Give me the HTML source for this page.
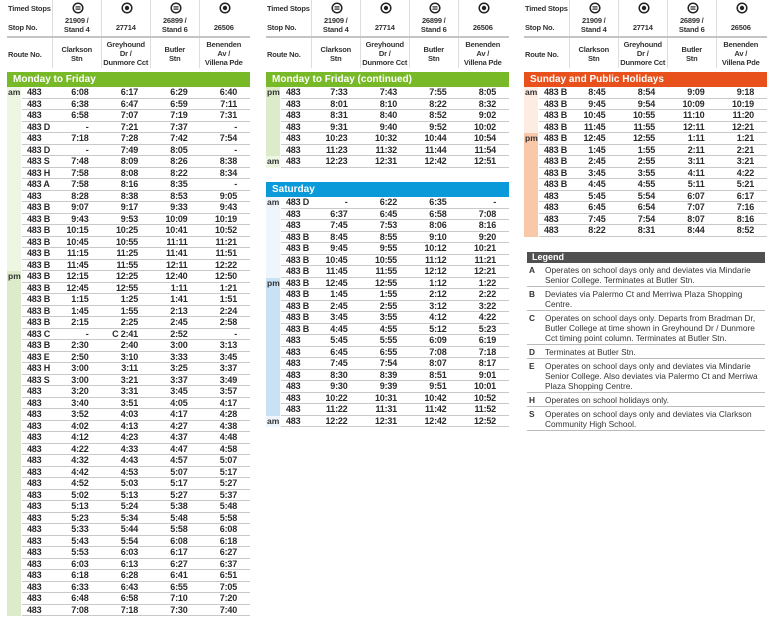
<!DOCTYPE html>
<html><head><meta charset="utf-8"><style>
*{margin:0;padding:0;box-sizing:border-box}
body{width:768px;height:620px;background:#fff;position:relative;overflow:hidden;font-family:"Liberation Sans",sans-serif;color:#2a2a2a}
.p{position:absolute;top:0;width:243px;height:620px}
.h{position:absolute;font:bold 7.5px/9px "Liberation Sans",sans-serif;color:#333;white-space:nowrap;letter-spacing:-0.2px}
.c{position:absolute;width:49.5px;text-align:center;font:bold 7.5px/9px "Liberation Sans",sans-serif;color:#333;white-space:nowrap;letter-spacing:-0.2px}
.vl{position:absolute;top:0;height:68px;width:1px;background:#ddd}
.hl{position:absolute;left:0;width:243px;top:36px;height:2px;background:#c4c4c4}
.ic{position:absolute;top:2px;width:12px;height:12px}
.band{position:absolute;left:0;width:243px;height:15px;color:#fff;font:bold 10px/15px "Liberation Sans",sans-serif;padding-left:6px;white-space:nowrap}
.sec{position:absolute;left:0;width:243px}
.r{display:flex;height:11.5px;margin-left:15px;border-bottom:1px solid #c9c9c9;font:bold 9px/11px "Liberation Sans",sans-serif;color:#2a2a2a;white-space:nowrap;letter-spacing:-0.2px}
.r span{display:block;width:49.5px;text-align:right;padding-right:13px;overflow:visible}
.r span:first-child{width:30px;text-align:left;padding-left:5px;padding-right:0}
.sd{position:absolute;left:0;width:14px;font:bold 8.5px/11px "Liberation Sans",sans-serif;padding-left:1px;color:#333}
.lg{position:absolute;left:527px;width:238px}
.lh{height:11px;background:#505050;color:#fff;font:bold 9px/11px "Liberation Sans",sans-serif;padding-left:5px}
.le{display:flex;border-bottom:1.5px solid #bbb;font:8.3px/10px "Liberation Sans",sans-serif;color:#333;padding:2px 0 1px 2px}
.le b{width:16px;flex:none}
</style></head><body>

<div class="p" style="left:7px">
<div class="h" style="left:1px;top:4px">Timed Stops</div>
<div class="h" style="left:1px;top:23px">Stop No.</div>
<div class="h" style="left:1px;top:50px">Route No.</div>
<div class="vl" style="left:45px"></div><div class="vl" style="left:94px"></div><div class="vl" style="left:143px"></div><div class="vl" style="left:192px"></div>
<svg class="ic" style="left:65px" viewBox="0 0 12 12"><circle cx="6" cy="6" r="4.8" fill="none" stroke="#222" stroke-width="1.5"/><rect x="3.5" y="4.3" width="5" height="1.2" fill="#222"/><rect x="3.5" y="6.5" width="5" height="1.2" fill="#222"/></svg>
<svg class="ic" style="left:114px" viewBox="0 0 12 12"><circle cx="6" cy="6" r="4.8" fill="none" stroke="#222" stroke-width="1.5"/><circle cx="6" cy="6" r="2.2" fill="#222"/></svg>
<svg class="ic" style="left:163px" viewBox="0 0 12 12"><circle cx="6" cy="6" r="4.8" fill="none" stroke="#222" stroke-width="1.5"/><rect x="3.5" y="4.3" width="5" height="1.2" fill="#222"/><rect x="3.5" y="6.5" width="5" height="1.2" fill="#222"/></svg>
<svg class="ic" style="left:212px" viewBox="0 0 12 12"><circle cx="6" cy="6" r="4.8" fill="none" stroke="#222" stroke-width="1.5"/><circle cx="6" cy="6" r="2.2" fill="#222"/></svg>
<div class="c" style="left:45px;top:16px">21909 /<br>Stand 4</div>
<div class="c" style="left:94px;top:23px">27714</div>
<div class="c" style="left:143px;top:16px">26899 /<br>Stand 6</div>
<div class="c" style="left:192px;top:23px">26506</div>
<div class="hl"></div>
<div class="c" style="left:45px;top:45px">Clarkson<br>Stn</div>
<div class="c" style="left:94px;top:40px">Greyhound<br>Dr /<br>Dunmore Cct</div>
<div class="c" style="left:143px;top:45px">Butler<br>Stn</div>
<div class="c" style="left:192px;top:40px">Benenden<br>Av /<br>Villena Pde</div>
<div class="band" style="top:72px;background:#78b928">Monday to Friday</div>
<div class="sd" style="top:87px;height:184px;background:#edf5e3">am</div>
<div class="sd" style="top:271px;height:345px;background:#dcebc9">pm</div>
<div class="sec" style="top:87px">
<div class="r"><span>483</span><span>6:08</span><span>6:17</span><span>6:29</span><span>6:40</span></div>
<div class="r"><span>483</span><span>6:38</span><span>6:47</span><span>6:59</span><span>7:11</span></div>
<div class="r"><span>483</span><span>6:58</span><span>7:07</span><span>7:19</span><span>7:31</span></div>
<div class="r"><span>483 D</span><span>-</span><span>7:21</span><span>7:37</span><span>-</span></div>
<div class="r"><span>483</span><span>7:18</span><span>7:28</span><span>7:42</span><span>7:54</span></div>
<div class="r"><span>483 D</span><span>-</span><span>7:49</span><span>8:05</span><span>-</span></div>
<div class="r"><span>483 S</span><span>7:48</span><span>8:09</span><span>8:26</span><span>8:38</span></div>
<div class="r"><span>483 H</span><span>7:58</span><span>8:08</span><span>8:22</span><span>8:34</span></div>
<div class="r"><span>483 A</span><span>7:58</span><span>8:16</span><span>8:35</span><span>-</span></div>
<div class="r"><span>483</span><span>8:28</span><span>8:38</span><span>8:53</span><span>9:05</span></div>
<div class="r"><span>483 B</span><span>9:07</span><span>9:17</span><span>9:33</span><span>9:43</span></div>
<div class="r"><span>483 B</span><span>9:43</span><span>9:53</span><span>10:09</span><span>10:19</span></div>
<div class="r"><span>483 B</span><span>10:15</span><span>10:25</span><span>10:41</span><span>10:52</span></div>
<div class="r"><span>483 B</span><span>10:45</span><span>10:55</span><span>11:11</span><span>11:21</span></div>
<div class="r"><span>483 B</span><span>11:15</span><span>11:25</span><span>11:41</span><span>11:51</span></div>
<div class="r"><span>483 B</span><span>11:45</span><span>11:55</span><span>12:11</span><span>12:22</span></div>
<div class="r"><span>483 B</span><span>12:15</span><span>12:25</span><span>12:40</span><span>12:50</span></div>
<div class="r"><span>483 B</span><span>12:45</span><span>12:55</span><span>1:11</span><span>1:21</span></div>
<div class="r"><span>483 B</span><span>1:15</span><span>1:25</span><span>1:41</span><span>1:51</span></div>
<div class="r"><span>483 B</span><span>1:45</span><span>1:55</span><span>2:13</span><span>2:24</span></div>
<div class="r"><span>483 B</span><span>2:15</span><span>2:25</span><span>2:45</span><span>2:58</span></div>
<div class="r"><span>483 C</span><span>-</span><span>C 2:41</span><span>2:52</span><span>-</span></div>
<div class="r"><span>483 B</span><span>2:30</span><span>2:40</span><span>3:00</span><span>3:13</span></div>
<div class="r"><span>483 E</span><span>2:50</span><span>3:10</span><span>3:33</span><span>3:45</span></div>
<div class="r"><span>483 H</span><span>3:00</span><span>3:11</span><span>3:25</span><span>3:37</span></div>
<div class="r"><span>483 S</span><span>3:00</span><span>3:21</span><span>3:37</span><span>3:49</span></div>
<div class="r"><span>483</span><span>3:20</span><span>3:31</span><span>3:45</span><span>3:57</span></div>
<div class="r"><span>483</span><span>3:40</span><span>3:51</span><span>4:05</span><span>4:17</span></div>
<div class="r"><span>483</span><span>3:52</span><span>4:03</span><span>4:17</span><span>4:28</span></div>
<div class="r"><span>483</span><span>4:02</span><span>4:13</span><span>4:27</span><span>4:38</span></div>
<div class="r"><span>483</span><span>4:12</span><span>4:23</span><span>4:37</span><span>4:48</span></div>
<div class="r"><span>483</span><span>4:22</span><span>4:33</span><span>4:47</span><span>4:58</span></div>
<div class="r"><span>483</span><span>4:32</span><span>4:43</span><span>4:57</span><span>5:07</span></div>
<div class="r"><span>483</span><span>4:42</span><span>4:53</span><span>5:07</span><span>5:17</span></div>
<div class="r"><span>483</span><span>4:52</span><span>5:03</span><span>5:17</span><span>5:27</span></div>
<div class="r"><span>483</span><span>5:02</span><span>5:13</span><span>5:27</span><span>5:37</span></div>
<div class="r"><span>483</span><span>5:13</span><span>5:24</span><span>5:38</span><span>5:48</span></div>
<div class="r"><span>483</span><span>5:23</span><span>5:34</span><span>5:48</span><span>5:58</span></div>
<div class="r"><span>483</span><span>5:33</span><span>5:44</span><span>5:58</span><span>6:08</span></div>
<div class="r"><span>483</span><span>5:43</span><span>5:54</span><span>6:08</span><span>6:18</span></div>
<div class="r"><span>483</span><span>5:53</span><span>6:03</span><span>6:17</span><span>6:27</span></div>
<div class="r"><span>483</span><span>6:03</span><span>6:13</span><span>6:27</span><span>6:37</span></div>
<div class="r"><span>483</span><span>6:18</span><span>6:28</span><span>6:41</span><span>6:51</span></div>
<div class="r"><span>483</span><span>6:33</span><span>6:43</span><span>6:55</span><span>7:05</span></div>
<div class="r"><span>483</span><span>6:48</span><span>6:58</span><span>7:10</span><span>7:20</span></div>
<div class="r"><span>483</span><span>7:08</span><span>7:18</span><span>7:30</span><span>7:40</span></div>
</div>
</div>

<div class="p" style="left:266px">
<div class="h" style="left:1px;top:4px">Timed Stops</div>
<div class="h" style="left:1px;top:23px">Stop No.</div>
<div class="h" style="left:1px;top:50px">Route No.</div>
<div class="vl" style="left:45px"></div><div class="vl" style="left:94px"></div><div class="vl" style="left:143px"></div><div class="vl" style="left:192px"></div>
<svg class="ic" style="left:65px" viewBox="0 0 12 12"><circle cx="6" cy="6" r="4.8" fill="none" stroke="#222" stroke-width="1.5"/><rect x="3.5" y="4.3" width="5" height="1.2" fill="#222"/><rect x="3.5" y="6.5" width="5" height="1.2" fill="#222"/></svg>
<svg class="ic" style="left:114px" viewBox="0 0 12 12"><circle cx="6" cy="6" r="4.8" fill="none" stroke="#222" stroke-width="1.5"/><circle cx="6" cy="6" r="2.2" fill="#222"/></svg>
<svg class="ic" style="left:163px" viewBox="0 0 12 12"><circle cx="6" cy="6" r="4.8" fill="none" stroke="#222" stroke-width="1.5"/><rect x="3.5" y="4.3" width="5" height="1.2" fill="#222"/><rect x="3.5" y="6.5" width="5" height="1.2" fill="#222"/></svg>
<svg class="ic" style="left:212px" viewBox="0 0 12 12"><circle cx="6" cy="6" r="4.8" fill="none" stroke="#222" stroke-width="1.5"/><circle cx="6" cy="6" r="2.2" fill="#222"/></svg>
<div class="c" style="left:45px;top:16px">21909 /<br>Stand 4</div>
<div class="c" style="left:94px;top:23px">27714</div>
<div class="c" style="left:143px;top:16px">26899 /<br>Stand 6</div>
<div class="c" style="left:192px;top:23px">26506</div>
<div class="hl"></div>
<div class="c" style="left:45px;top:45px">Clarkson<br>Stn</div>
<div class="c" style="left:94px;top:40px">Greyhound<br>Dr /<br>Dunmore Cct</div>
<div class="c" style="left:143px;top:45px">Butler<br>Stn</div>
<div class="c" style="left:192px;top:40px">Benenden<br>Av /<br>Villena Pde</div>
<div class="band" style="top:72px;background:#78b928">Monday to Friday (continued)</div>
<div class="sd" style="top:87px;height:69px;background:#dcebc9">pm</div>
<div class="sd" style="top:156px;height:11.5px;background:#edf5e3">am</div>
<div class="sec" style="top:87px">
<div class="r"><span>483</span><span>7:33</span><span>7:43</span><span>7:55</span><span>8:05</span></div>
<div class="r"><span>483</span><span>8:01</span><span>8:10</span><span>8:22</span><span>8:32</span></div>
<div class="r"><span>483</span><span>8:31</span><span>8:40</span><span>8:52</span><span>9:02</span></div>
<div class="r"><span>483</span><span>9:31</span><span>9:40</span><span>9:52</span><span>10:02</span></div>
<div class="r"><span>483</span><span>10:23</span><span>10:32</span><span>10:44</span><span>10:54</span></div>
<div class="r"><span>483</span><span>11:23</span><span>11:32</span><span>11:44</span><span>11:54</span></div>
<div class="r"><span>483</span><span>12:23</span><span>12:31</span><span>12:42</span><span>12:51</span></div>
</div>
<div class="band" style="top:182px;background:#0a9ad9">Saturday</div>
<div class="sd" style="top:197px;height:80.5px;background:#eef5fc">am</div>
<div class="sd" style="top:277.5px;height:138px;background:#c9e1f5">pm</div>
<div class="sd" style="top:415.5px;height:11.5px;background:#eef5fc">am</div>
<div class="sec" style="top:197px">
<div class="r"><span>483 D</span><span>-</span><span>6:22</span><span>6:35</span><span>-</span></div>
<div class="r"><span>483</span><span>6:37</span><span>6:45</span><span>6:58</span><span>7:08</span></div>
<div class="r"><span>483</span><span>7:45</span><span>7:53</span><span>8:06</span><span>8:16</span></div>
<div class="r"><span>483 B</span><span>8:45</span><span>8:55</span><span>9:10</span><span>9:20</span></div>
<div class="r"><span>483 B</span><span>9:45</span><span>9:55</span><span>10:12</span><span>10:21</span></div>
<div class="r"><span>483 B</span><span>10:45</span><span>10:55</span><span>11:12</span><span>11:21</span></div>
<div class="r"><span>483 B</span><span>11:45</span><span>11:55</span><span>12:12</span><span>12:21</span></div>
<div class="r"><span>483 B</span><span>12:45</span><span>12:55</span><span>1:12</span><span>1:22</span></div>
<div class="r"><span>483 B</span><span>1:45</span><span>1:55</span><span>2:12</span><span>2:22</span></div>
<div class="r"><span>483 B</span><span>2:45</span><span>2:55</span><span>3:12</span><span>3:22</span></div>
<div class="r"><span>483 B</span><span>3:45</span><span>3:55</span><span>4:12</span><span>4:22</span></div>
<div class="r"><span>483 B</span><span>4:45</span><span>4:55</span><span>5:12</span><span>5:23</span></div>
<div class="r"><span>483</span><span>5:45</span><span>5:55</span><span>6:09</span><span>6:19</span></div>
<div class="r"><span>483</span><span>6:45</span><span>6:55</span><span>7:08</span><span>7:18</span></div>
<div class="r"><span>483</span><span>7:45</span><span>7:54</span><span>8:07</span><span>8:17</span></div>
<div class="r"><span>483</span><span>8:30</span><span>8:39</span><span>8:51</span><span>9:01</span></div>
<div class="r"><span>483</span><span>9:30</span><span>9:39</span><span>9:51</span><span>10:01</span></div>
<div class="r"><span>483</span><span>10:22</span><span>10:31</span><span>10:42</span><span>10:52</span></div>
<div class="r"><span>483</span><span>11:22</span><span>11:31</span><span>11:42</span><span>11:52</span></div>
<div class="r"><span>483</span><span>12:22</span><span>12:31</span><span>12:42</span><span>12:52</span></div>
</div>
</div>

<div class="p" style="left:524px">
<div class="h" style="left:1px;top:4px">Timed Stops</div>
<div class="h" style="left:1px;top:23px">Stop No.</div>
<div class="h" style="left:1px;top:50px">Route No.</div>
<div class="vl" style="left:45px"></div><div class="vl" style="left:94px"></div><div class="vl" style="left:143px"></div><div class="vl" style="left:192px"></div>
<svg class="ic" style="left:65px" viewBox="0 0 12 12"><circle cx="6" cy="6" r="4.8" fill="none" stroke="#222" stroke-width="1.5"/><rect x="3.5" y="4.3" width="5" height="1.2" fill="#222"/><rect x="3.5" y="6.5" width="5" height="1.2" fill="#222"/></svg>
<svg class="ic" style="left:114px" viewBox="0 0 12 12"><circle cx="6" cy="6" r="4.8" fill="none" stroke="#222" stroke-width="1.5"/><circle cx="6" cy="6" r="2.2" fill="#222"/></svg>
<svg class="ic" style="left:163px" viewBox="0 0 12 12"><circle cx="6" cy="6" r="4.8" fill="none" stroke="#222" stroke-width="1.5"/><rect x="3.5" y="4.3" width="5" height="1.2" fill="#222"/><rect x="3.5" y="6.5" width="5" height="1.2" fill="#222"/></svg>
<svg class="ic" style="left:212px" viewBox="0 0 12 12"><circle cx="6" cy="6" r="4.8" fill="none" stroke="#222" stroke-width="1.5"/><circle cx="6" cy="6" r="2.2" fill="#222"/></svg>
<div class="c" style="left:45px;top:16px">21909 /<br>Stand 4</div>
<div class="c" style="left:94px;top:23px">27714</div>
<div class="c" style="left:143px;top:16px">26899 /<br>Stand 6</div>
<div class="c" style="left:192px;top:23px">26506</div>
<div class="hl"></div>
<div class="c" style="left:45px;top:45px">Clarkson<br>Stn</div>
<div class="c" style="left:94px;top:40px">Greyhound<br>Dr /<br>Dunmore Cct</div>
<div class="c" style="left:143px;top:45px">Butler<br>Stn</div>
<div class="c" style="left:192px;top:40px">Benenden<br>Av /<br>Villena Pde</div>
<div class="band" style="top:72px;background:#e8501c">Sunday and Public Holidays</div>
<div class="sd" style="top:87px;height:46px;background:#fdece2">am</div>
<div class="sd" style="top:133px;height:103.5px;background:#f9c8a8">pm</div>
<div class="sec" style="top:87px">
<div class="r"><span>483 B</span><span>8:45</span><span>8:54</span><span>9:09</span><span>9:18</span></div>
<div class="r"><span>483 B</span><span>9:45</span><span>9:54</span><span>10:09</span><span>10:19</span></div>
<div class="r"><span>483 B</span><span>10:45</span><span>10:55</span><span>11:10</span><span>11:20</span></div>
<div class="r"><span>483 B</span><span>11:45</span><span>11:55</span><span>12:11</span><span>12:21</span></div>
<div class="r"><span>483 B</span><span>12:45</span><span>12:55</span><span>1:11</span><span>1:21</span></div>
<div class="r"><span>483 B</span><span>1:45</span><span>1:55</span><span>2:11</span><span>2:21</span></div>
<div class="r"><span>483 B</span><span>2:45</span><span>2:55</span><span>3:11</span><span>3:21</span></div>
<div class="r"><span>483 B</span><span>3:45</span><span>3:55</span><span>4:11</span><span>4:22</span></div>
<div class="r"><span>483 B</span><span>4:45</span><span>4:55</span><span>5:11</span><span>5:21</span></div>
<div class="r"><span>483</span><span>5:45</span><span>5:54</span><span>6:07</span><span>6:17</span></div>
<div class="r"><span>483</span><span>6:45</span><span>6:54</span><span>7:07</span><span>7:16</span></div>
<div class="r"><span>483</span><span>7:45</span><span>7:54</span><span>8:07</span><span>8:16</span></div>
<div class="r"><span>483</span><span>8:22</span><span>8:31</span><span>8:44</span><span>8:52</span></div>
</div>
</div>

<div class="lg" style="top:252px">
<div class="lh">Legend</div>
<div class="le"><b>A</b><div>Operates on school days only and deviates via Mindarie Senior College. Terminates at Butler Stn.</div></div>
<div class="le"><b>B</b><div>Deviates via Palermo Ct and Merriwa Plaza Shopping Centre.</div></div>
<div class="le"><b>C</b><div>Operates on school days only. Departs from Bradman Dr, Butler College at time shown in Greyhound Dr / Dunmore Cct timing point column. Terminates at Butler Stn.</div></div>
<div class="le"><b>D</b><div>Terminates at Butler Stn.</div></div>
<div class="le"><b>E</b><div>Operates on school days only and deviates via Mindarie Senior College. Also deviates via Palermo Ct and Merriwa Plaza Shopping Centre.</div></div>
<div class="le"><b>H</b><div>Operates on school holidays only.</div></div>
<div class="le"><b>S</b><div>Operates on school days only and deviates via Clarkson Community High School.</div></div>
</div>
</body></html>
